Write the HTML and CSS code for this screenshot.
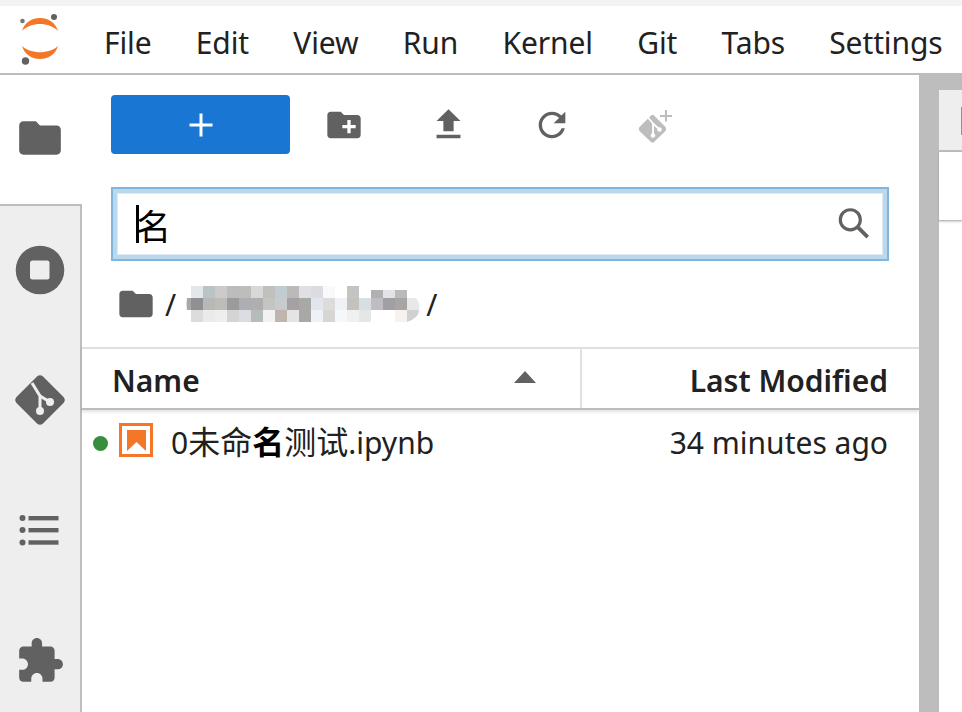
FILE: index.html
```html
<!DOCTYPE html>
<html lang="zh">
<head>
<meta charset="utf-8">
<title>JupyterLab</title>
<link rel="stylesheet" href="styles.css">
</head>
<body>
<div class="strip"></div>
<header class="topbar">
  <svg class="logo" width="60" height="67" viewBox="0 0 60 67">
    <path fill="#f37726" d="M22 31 C27 13.700 53 13.700 58 31 C49 21.700 31 21.700 22 31Z"/>
    <path fill="#f37726" d="M22 46 C31 54.300 49 54.300 58 46 C53 63.300 27 63.300 22 46Z"/>
    <circle cx="54" cy="17" r="3" fill="#616161"/>
    <circle cx="22.500" cy="21" r="2.300" fill="#757575"/>
    <circle cx="25.500" cy="61" r="3.700" fill="#616161"/>
  </svg>
  <nav class="menu">
    <span>File</span><span>Edit</span><span>View</span><span>Run</span><span>Kernel</span><span>Git</span><span>Tabs</span><span>Settings</span>
  </nav>
</header>
<main class="shell">
  <aside class="rail">
    <div class="tab tab-active">
      <svg width="50" height="50" viewBox="0 0 24 24"><path class="ic" d="M10 4H4c-1.100 0-1.990.9-1.990 2L2 18c0 1.100.9 2 2 2h16c1.100 0 2-.9 2-2V8c0-1.100-.9-2-2-2h-8l-2-2z"/></svg>
    </div>
    <div class="tab tab-second">
      <svg width="50" height="50" viewBox="0 0 50 50"><circle class="ic" cx="25" cy="25" r="24.300"/><rect x="15" y="15.500" width="19.500" height="19" rx="2.500" fill="#eeeeee"/></svg>
    </div>
    <div class="tab">
      <svg width="52" height="52" viewBox="0 0 52 52">
        <path class="ic" d="M23 2.500 Q26 0 29 2.500 L49.500 23 Q52 26 49.500 29 L29 49.500 Q26 52 23 49.500 L2.500 29 Q0 26 2.500 23Z"/>
        <g fill="none" stroke="#eeeeee" stroke-width="3"><path d="M18 9 L26 22 V37"/><path d="M26 22 L36 28"/></g>
        <circle cx="26" cy="37" r="4" fill="#eeeeee"/><circle cx="36" cy="28" r="4" fill="#eeeeee"/>
      </svg>
    </div>
    <div class="tab">
      <svg width="42" height="34" viewBox="0 0 42 34">
        <g class="ic"><circle cx="3.500" cy="5" r="3"/><circle cx="3.500" cy="17" r="3"/><circle cx="3.500" cy="29.500" r="3"/>
        <rect x="9.500" y="3" width="30" height="4.400"/><rect x="9.500" y="15" width="30" height="4.400"/><rect x="9.500" y="27.300" width="30" height="4.400"/></g>
      </svg>
    </div>
    <div class="tab tab-last">
      <svg width="50" height="50" viewBox="0 0 24 24"><path class="ic" d="M20.500 11H19V7c0-1.100-.9-2-2-2h-4V3.500C13 2.120 11.880 1 10.500 1S8 2.120 8 3.500V5H4c-1.100 0-1.990.9-1.990 2v3.800H3.500c1.490 0 2.700 1.210 2.700 2.700s-1.210 2.700-2.700 2.700H2V20c0 1.100.9 2 2 2h3.800v-1.500c0-1.490 1.210-2.700 2.700-2.700 1.490 0 2.700 1.210 2.700 2.700V22H17c1.100 0 2-.9 2-2v-4h1.500c1.380 0 2.500-1.120 2.500-2.500S21.880 11 20.500 11z"/></svg>
    </div>
  </aside>

  <section class="files">
    <div class="toolbar">
      <button class="launch">
        <svg width="24" height="24" viewBox="0 0 24 24"><path d="M12 0.500v23M0.500 12h23" stroke="#fff" stroke-width="3" fill="none"/></svg>
      </button>
      <div class="tool"><svg width="40" height="40" viewBox="0 0 24 24"><path class="ic" d="M20 6h-8l-2-2H4c-1.110 0-1.990.89-1.990 2L2 18c0 1.110.89 2 2 2h16c1.110 0 2-.89 2-2V8c0-1.110-.89-2-2-2zm-1 8h-3v3h-2v-3h-3v-2h3V9h2v3h3v2z"/></svg></div>
      <div class="tool"><svg width="41" height="41" viewBox="0 0 24 24"><path class="ic" d="M9 16h6v-6h4l-7-7-7 7h4v6zm-4 2h14v2H5v-2z"/></svg></div>
      <div class="tool"><svg width="40" height="40" viewBox="0 0 24 24"><path class="ic" d="M17.650 6.350C16.200 4.900 14.210 4 12 4c-4.420 0-7.990 3.580-7.990 8s3.570 8 7.990 8c3.730 0 6.840-2.550 7.730-6h-2.080c-.82 2.330-3.040 4-5.650 4-3.310 0-6-2.690-6-6s2.690-6 6-6c1.660 0 3.140.69 4.220 1.780L13 11h7V4l-2.350 2.350z"/></svg></div>
      <div class="tool"><svg width="36" height="38" viewBox="0 0 36 38">
        <path fill="#bdbdbd" d="M13 9.500 Q14.500 8 16 9.500 L27.500 21 Q29 23 27.500 25 L16 36 Q14.500 37.500 13 36 L1.500 25 Q0 23 1.500 21Z"/>
        <g fill="none" stroke="#fff" stroke-width="1.800"><path d="M10 11.500 L15 17.500 V29"/><path d="M15 17.500 L21 23"/></g>
        <circle cx="15" cy="29.500" r="2.300" fill="#fff"/><circle cx="21.500" cy="23.500" r="2.300" fill="#fff"/>
        <path d="M28 4v11.500M22 10h12" stroke="#bdbdbd" stroke-width="2" fill="none"/>
      </svg></div>
    </div>

    <div class="search">
      <div class="search-inner">
        <span class="caret"></span><span class="query">名</span>
        <svg class="search-ic" width="38" height="38" viewBox="0 0 36 36"><circle cx="14.500" cy="14" r="9.500" fill="none" stroke="#616161" stroke-width="3"/><path d="M21.500 21 L31 30.500" stroke="#616161" stroke-width="3.600"/></svg>
      </div>
    </div>

    <div class="crumbs">
      <svg width="40" height="40" viewBox="0 0 24 24"><path class="ic" d="M10 4H4c-1.100 0-1.990.9-1.990 2L2 18c0 1.100.9 2 2 2h16c1.100 0 2-.9 2-2V8c0-1.100-.9-2-2-2h-8l-2-2z"/></svg>
      <span class="slash">/</span>
      <svg class="mosaic" width="234" height="36" viewBox="0 0 234 36" shape-rendering="crispEdges">
        <path d="M5 12H1Q0 18 1 24H5Z" fill="#a8a8a8" shape-rendering="auto"/>
        <g transform="translate(5 0)">
          <rect x="0" y="0" width="12" height="12" fill="#e4e7ea"/><rect x="12" y="0" width="12" height="12" fill="#b8c4c6"/><rect x="24" y="0" width="12" height="12" fill="#cfcaca"/><rect x="36" y="0" width="12" height="12" fill="#bcbcbc"/><rect x="48" y="0" width="12" height="12" fill="#bdbdbb"/><rect x="60" y="0" width="12" height="12" fill="#d8d8d8"/><rect x="72" y="0" width="12" height="12" fill="#c0c0bc"/><rect x="84" y="0" width="12" height="12" fill="#c0cccf"/><rect x="96" y="0" width="12" height="12" fill="#bcb9b9"/><rect x="108" y="0" width="12" height="12" fill="#dfdfe5"/><rect x="120" y="0" width="12" height="12" fill="#dcdce0"/><rect x="132" y="0" width="12" height="12" fill="#f8f9f8"/><rect x="156" y="0" width="12" height="12" fill="#c4c4c2"/><rect x="180" y="4" width="12" height="8" fill="#b0b0b4"/><rect x="192" y="4" width="12" height="8" fill="#e2e2e8"/><rect x="204" y="4" width="12" height="8" fill="#b8bcb8"/>
          <rect x="0" y="12" width="12" height="12" fill="#8f9093"/><rect x="12" y="12" width="12" height="12" fill="#b8b8b6"/><rect x="24" y="12" width="12" height="12" fill="#bcbdb9"/><rect x="36" y="12" width="12" height="12" fill="#9b9b9c"/><rect x="48" y="12" width="12" height="12" fill="#acaeb4"/><rect x="60" y="12" width="12" height="12" fill="#aeafae"/><rect x="72" y="12" width="12" height="12" fill="#c4c4c2"/><rect x="84" y="12" width="12" height="12" fill="#c8cacb"/><rect x="96" y="12" width="12" height="12" fill="#a5a0a3"/><rect x="108" y="12" width="12" height="12" fill="#a8a8a6"/><rect x="120" y="12" width="12" height="12" fill="#e1e6ec"/><rect x="132" y="12" width="12" height="12" fill="#dcdcdc"/><rect x="144" y="12" width="12" height="12" fill="#eef2f6"/><rect x="156" y="12" width="12" height="12" fill="#c4c2be"/><rect x="168" y="12" width="12" height="12" fill="#d8dfe2"/><rect x="180" y="12" width="12" height="12" fill="#bebec2"/><rect x="192" y="12" width="12" height="12" fill="#a0a0a4"/><rect x="204" y="12" width="12" height="12" fill="#a8a6a4"/><path d="M216 12H224Q229 14 228 24H216Z" fill="#e8e8e8" shape-rendering="auto"/>
          <rect x="0" y="24" width="12" height="12" fill="#dcdcdc"/><rect x="12" y="24" width="12" height="12" fill="#ebebeb"/><rect x="24" y="24" width="12" height="12" fill="#eeeeee"/><rect x="36" y="24" width="12" height="12" fill="#d4d4d4"/><rect x="48" y="24" width="12" height="12" fill="#dcdde0"/><rect x="60" y="24" width="12" height="12" fill="#b4bcbc"/><rect x="72" y="24" width="12" height="12" fill="#f2f2f2"/><rect x="84" y="24" width="12" height="12" fill="#bfb4ae"/><rect x="96" y="24" width="12" height="12" fill="#e4e4e4"/><rect x="108" y="24" width="12" height="12" fill="#a8a8a6"/><rect x="120" y="24" width="12" height="12" fill="#eef2f5"/><rect x="132" y="24" width="12" height="12" fill="#d8d6d4"/><rect x="144" y="24" width="12" height="12" fill="#f6f7f8"/><rect x="156" y="24" width="12" height="12" fill="#f0f0f0"/><rect x="168" y="24" width="12" height="12" fill="#e4e6e8"/><rect x="204" y="24" width="12" height="12" fill="#f8f2ee"/><path d="M216 24H228Q228 32 216 36Z" fill="#d0d0d0" shape-rendering="auto"/>
        </g>
      </svg>
      <span class="slash slash-end">/</span>
    </div>

    <div class="thead">
      <div class="th-name"><span>Name</span><svg width="22" height="12" viewBox="0 0 22 12"><path class="ic" d="M11 0 L22 12 H0Z"/></svg></div>
      <div class="th-mod">Last Modified</div>
    </div>

    <div class="row">
      <span class="dot"></span>
      <svg class="nb" width="34" height="34" viewBox="0 0 34 34"><rect x="1.500" y="1.500" width="31" height="31" fill="none" stroke="#f37726" stroke-width="3"/><path fill="#f37726" d="M8 7H27V28L17.500 19 8 28Z"/></svg>
      <span class="fname">0<span class="cjk">未命<b>名</b>测试</span>.ipynb</span>
      <span class="mtime">34 minutes ago</span>
    </div>
  </section>

  <div class="splitter"></div>

  <section class="dock">
    <div class="dock-gap"></div>
    <div class="dock-tabs"><span class="dock-mark"></span></div>
    <div class="dock-tool"></div>
    <div class="dock-body"></div>
  </section>
</main>
</body>
</html>
```

FILE: styles.css
```css
* { box-sizing: border-box; }
html, body { margin: 0; height: 712px; overflow: hidden; background: #fff; }
body {
  font-family: "Noto Sans", "Noto Sans CJK SC", sans-serif;
  font-size: 30px;
  color: #212121;
  display: flex;
  flex-direction: column;
  width: 962px;
}
svg { display: block; flex: none; }
.ic { fill: #616161; }

.strip { height: 6px; background: #f3f3f3; flex: none; }
.topbar {
  height: 69px;
  flex: none;
  display: flex;
  border-bottom: 2px solid #bdbdbd;
  background: #fff;
  overflow: hidden;
}
.logo { margin-top: -6px; height: 67px; }
.menu { display: flex; gap: 44.300px; letter-spacing: -.12px; margin-left: 44px; align-items: center; white-space: nowrap; line-height: 1; padding-top: 7px; }

.shell { flex: 1; display: flex; min-height: 0; }

.rail {
  width: 82px;
  flex: none;
  background: #eeeeee;
  border-right: 2px solid #bdbdbd;
  display: flex;
  flex-direction: column;
}
.tab { height: 130px; flex: none; display: flex; align-items: center; justify-content: center; }
.tab-active { height: 129px; width: 82px; background: #fff; padding: 0 3px 3px 0; }
.tab-second { height: 131px; border-top: 2px solid #bdbdbd; padding-bottom: 2px; }
.tab-last { padding-top: 2px; }

.files { width: 837px; flex: none; background: #fff; display: flex; flex-direction: column; }
.toolbar { display: flex; align-items: center; margin: 20px 0 0 29px; height: 59px; }
.launch {
  width: 179px;
  height: 59px;
  border: 0;
  border-radius: 4px;
  background: #1976d2;
  display: flex;
  align-items: center;
  justify-content: center;
  padding: 0;
  margin-right: 2px;
}
.tool { width: 104px; display: flex; justify-content: center; }

.search {
  margin: 33px 0 0 29px;
  width: 778px;
  height: 74px;
  border: 2px solid #7fb6dd;
  padding: 5px;
  background: #bbd7ec;
}
.search-inner {
  height: 100%;
  background: #fff;
  outline: 1px solid #dcebf6;
  display: flex;
  align-items: center;
  padding-left: 18px;
  padding-right: 9px;
}
.caret { width: 3px; height: 38px; background: #000; flex: none; }
.query { font-size: 35px; color: #000; line-height: 1; margin-left: -3px; flex: 1; font-family: "Noto Sans CJK SC", sans-serif; font-weight: 400; }

.crumbs { height: 86px; flex: none; display: flex; align-items: center; padding-left: 34px; }
.slash { margin-left: 9px; }
.mosaic { margin-left: 10px; }
.slash-end { margin-left: 6px; }

.thead {
  height: 63px;
  flex: none;
  display: flex;
  border-top: 2px solid #e0e0e0;
  border-bottom: 2px solid #bdbdbd;
  box-shadow: 0 2px 3px rgba(0,0,0,.12);
  font-weight: 600;
}
.th-name { width: 500px; border-right: 2px solid #e0e0e0; display: flex; align-items: center; justify-content: space-between; padding: 4px 44px 0 30px; }
.th-name svg { margin-top: -8px; }
.th-mod { flex: 1; text-align: right; padding-right: 31px; line-height: 63px; }

.row { display: flex; align-items: center; height: 60px; padding-left: 11px; padding-right: 31px; }
.dot { width: 15px; height: 15px; border-radius: 50%; background: #388e3c; flex: none; margin-top: 7px; }
.nb { margin-left: 11px; }
.fname { margin-left: 18px; flex: 1; white-space: nowrap; }
.mtime { padding-top: 4px; }
.cjk { font-size: 32px; }
.fname b { color: #000; font-weight: 700; }

.splitter { width: 20px; flex: none; background: #bdbdbd; }

.dock { flex: 1; display: flex; flex-direction: column; background: #fff; }
.dock-gap { height: 15px; background: #bdbdbd; flex: none; }
.dock-tabs { height: 62px; flex: none; background: #eeeeee; border-bottom: 2px solid #bdbdbd; display: flex; justify-content: flex-end; padding-top: 17px; }
.dock-mark { width: 1px; height: 28px; background: #f37726; }
.dock-tool { height: 69px; flex: none; border-bottom: 1px solid #bdbdbd; box-shadow: 0 1px 2px rgba(0,0,0,.2); }
.dock-body { flex: 1; }
```
